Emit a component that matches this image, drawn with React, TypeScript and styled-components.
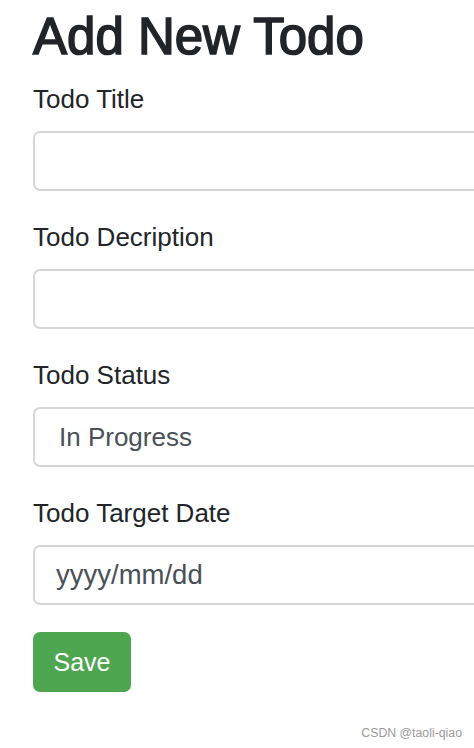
import React from 'react';
import styled, { createGlobalStyle } from 'styled-components';

const GlobalStyle = createGlobalStyle`
    html, body {
        margin: 0;
        padding: 0;
        background: #ffffff;
        overflow: hidden;
    }
    body {
        font-family: 'Liberation Sans', Arial, sans-serif;
        color: #212529;
    }
`;

const Page = styled.div`
    position: relative;
    width: 474px;
    height: 748px;
    overflow: hidden;
`;

const Container = styled.div`
    width: 600px;
    padding-left: 33px;
    box-sizing: border-box;
`;

const Heading = styled.h1`
    margin: 6px 0 16px 0;
    font-size: 51px;
    line-height: 62px;
    font-weight: 400;
    -webkit-text-stroke: 1.6px #212529;
    color: #212529;
`;

const Form = styled.form`
    display: flex;
    flex-direction: column;
`;

const Group = styled.div`
    display: flex;
    flex-direction: column;
    margin-bottom: 31px;
`;

const Label = styled.label`
    font-size: 26px;
    line-height: 30px;
    margin-bottom: 17px;
    color: #212529;
`;

const Field = styled.input<{ $size?: number }>`
    height: 60px;
    box-sizing: border-box;
    border: 2px solid #d4d6d8;
    border-radius: 7px;
    padding: 0 21px;
    font-family: 'Liberation Sans', Arial, sans-serif;
    font-size: ${(p) => p.$size || 26}px;
    color: #495057;
    background: #fff;
    outline: none;

    &::placeholder {
        color: #495057;
    }
`;

const Select = styled.select`
    height: 60px;
    box-sizing: border-box;
    border: 2px solid #d4d6d8;
    border-radius: 7px;
    padding: 0 24px;
    font-family: 'Liberation Sans', Arial, sans-serif;
    font-size: 26px;
    color: #495057;
    background: #fff;
    appearance: none;
    outline: none;
`;

const SaveButton = styled.button`
    align-self: flex-start;
    width: 98px;
    height: 60px;
    margin-top: -4px;
    border: none;
    border-radius: 7px;
    background-color: #4ea651;
    color: #ffffff;
    font-family: 'Liberation Sans', Arial, sans-serif;
    font-size: 25px;
    cursor: pointer;
`;

const Watermark = styled.div`
    position: absolute;
    right: 12px;
    bottom: 8px;
    font-family: 'Liberation Sans', Arial, sans-serif;
    font-size: 12.3px;
    color: #9a9a9a;
`;

function App() {
    return (
        <Page>
            <GlobalStyle />
            <Container>
                <Heading>Add New Todo</Heading>
                <Form onSubmit={(e) => e.preventDefault()}>
                    <Group>
                        <Label>Todo Title</Label>
                        <Field type="text" />
                    </Group>
                    <Group>
                        <Label>Todo Decription</Label>
                        <Field type="text" />
                    </Group>
                    <Group>
                        <Label>Todo Status</Label>
                        <Select defaultValue="In Progress">
                            <option>In Progress</option>
                            <option>Completed</option>
                        </Select>
                    </Group>
                    <Group>
                        <Label>Todo Target Date</Label>
                        <Field type="text" $size={27.5} placeholder="yyyy/mm/dd" />
                    </Group>
                    <SaveButton type="submit">Save</SaveButton>
                </Form>
            </Container>
            <Watermark>CSDN @taoli-qiao</Watermark>
        </Page>
    );
}

export default App;
